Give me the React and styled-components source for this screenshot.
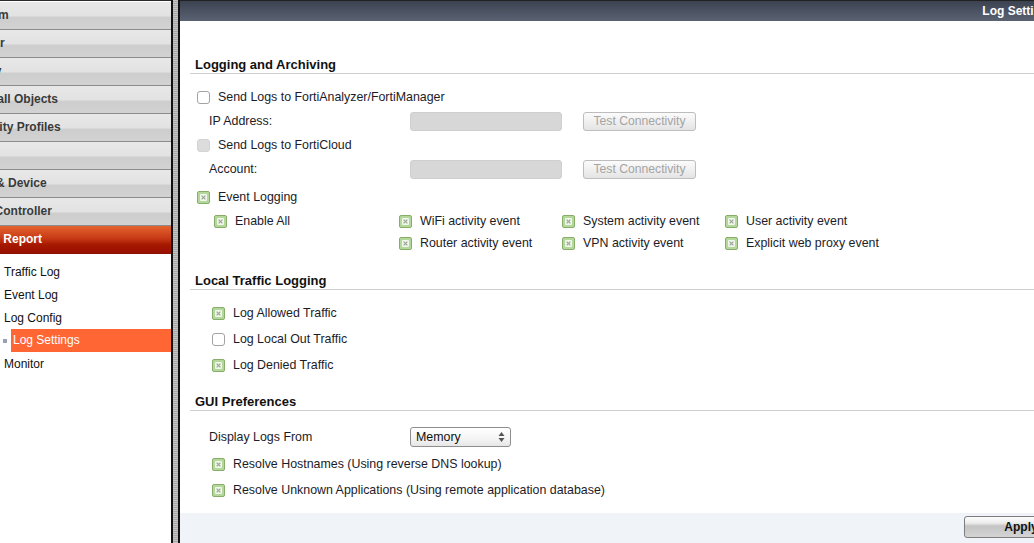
import React from 'react';
import styled, { createGlobalStyle } from 'styled-components';

const GlobalStyle = createGlobalStyle`
    html, body {
        margin: 0;
        padding: 0;
        overflow: hidden;
        background: #fff;
    }
    body {
        font-family: "Liberation Sans", Arial, sans-serif;
        font-size: 12px;
        color: #1c1c28;
    }
`

const Page = styled.div`
    display: flex;
    width: 1090px;
    height: 543px;
`

const Sidebar = styled.div`
    width: 171px;
    flex-shrink: 0;
    overflow: hidden;
    border-top: 1px solid #2a2a2a;
    box-sizing: border-box;
`

const SideInner = styled.div`
    margin-left: -34px;
    padding-top: 1px;
    width: 205px;
`

const MenuItem = styled.div`
    height: 27px;
    line-height: 27px;
    border-bottom: 1px solid ${props => props.$active ? '#8a1200' : '#8c8c8c'};
    font-weight: bold;
    font-size: 12px;
    white-space: nowrap;
    color: ${props => props.$active ? '#fff' : '#3a3a3a'};
    background: ${props => props.$active
        ? 'linear-gradient(to bottom, #e3632f 0%, #c83a16 45%, #a51800 70%, #9a1000 100%)'
        : 'linear-gradient(to bottom, #e8e8e8 0%, #e2e2e2 50%, #cdcdcd 58%, #d3d3d3 100%)'};
`

const SubList = styled.div`
    padding-top: 6px;
`

const SubItem = styled.div`
    display: flex;
    align-items: center;
    height: 23px;
    white-space: nowrap;
    padding-left: ${props => props.$selected ? '37px' : '38px'};
    color: #111;
`

const Bullet = styled.span`
    width: 4px;
    height: 4px;
    background: #9aa0b4;
    margin-right: 4px;
    flex-shrink: 0;
`

const Selected = styled.span`
    flex: 1;
    height: 23px;
    line-height: 23px;
    background: #ff6633;
    color: #fff;
    padding-left: 2px;
`

const Divider = styled.div`
    width: 5px;
    flex-shrink: 0;
    border-left: 2px solid #111;
    border-right: 2px solid #111;
    background: repeating-linear-gradient(to bottom, #c4c4c4 0px, #c4c4c4 1px, #a8a8a8 1px, #a8a8a8 2px);
`

const Main = styled.div`
    flex: 1;
    display: flex;
    flex-direction: column;
    min-width: 0;
`

const Header = styled.div`
    height: 20px;
    line-height: 20px;
    border-top: 1px solid #222;
    background: linear-gradient(to bottom, #3b4351 0%, #4e5665 60%, #5b6372 100%);
    color: #fff;
    font-weight: bold;
    font-size: 12px;
    text-align: right;
    padding-right: 35px;
`

const Content = styled.div`
    flex: 1;
    padding-left: 10px;
    background: #fff;
    font-size: 12.4px;
`

const SectionTitle = styled.div`
    margin-top: ${props => props.$top}px;
    padding-left: 5px;
    height: 16px;
    line-height: 16px;
    font-size: 13px;
    font-weight: bold;
    color: #111;
    border-bottom: 1px solid #cfcfcf;
`

const Rows = styled.div`
    margin-top: ${props => props.$top}px;
`

const Row = styled.div`
    display: flex;
    align-items: center;
    height: ${props => props.$h}px;
    margin-top: ${props => props.$mt || 0}px;
    padding-left: ${props => props.$indent}px;
    gap: 8px;
    white-space: nowrap;
`

const FieldLabel = styled.span`
    width: 193px;
    flex-shrink: 0;
`

const TextBox = styled.div`
    width: 152px;
    height: 19px;
    box-sizing: border-box;
    background: #d7d7d7;
    border: 1px solid #cfcfcf;
    border-radius: 3px;
`

const TestButton = styled.div`
    margin-left: 13px;
    width: 113px;
    height: 19px;
    box-sizing: border-box;
    border: 1px solid #bdbdbd;
    border-radius: 3px;
    background: linear-gradient(to bottom, #fbfbfb 0%, #f0f0f0 50%, #e4e4e4 100%);
    color: #a4a4a4;
    font-size: 12.2px;
    text-align: center;
    line-height: 17px;
`

const EventGrid = styled.div`
    display: grid;
    grid-template-columns: 185px 163px 163px 163px;
    grid-auto-rows: 22px;
    margin-top: 1px;
    margin-left: 24px;
`

const Cell = styled.div`
    display: flex;
    align-items: center;
    gap: 8px;
    white-space: nowrap;
`

const Select = styled.div`
    display: flex;
    align-items: center;
    justify-content: space-between;
    width: 101px;
    height: 20px;
    box-sizing: border-box;
    padding: 0 5px 0 5px;
    border: 1px solid #8e8e8e;
    border-radius: 3px;
    background: linear-gradient(to bottom, #ffffff 0%, #f4f4f4 60%, #e6e6e6 100%);
    color: #111;
`

const Footer = styled.div`
    height: 30px;
    background: #f0f3f8;
    display: flex;
    justify-content: flex-end;
    align-items: flex-start;
    padding-right: 12px;
`

const ApplyButton = styled.div`
    margin-top: 3px;
    width: 114px;
    height: 22px;
    box-sizing: border-box;
    border: 1px solid #7d7d7d;
    border-radius: 3px;
    background: linear-gradient(to bottom, #fdfdfd 0%, #ececec 30%, #c4c4c4 45%, #d4d4d4 100%);
    font-weight: bold;
    color: #111;
    text-align: center;
    line-height: 20px;
`

const Box = styled.span`
    display: inline-flex;
    align-items: center;
    justify-content: center;
    width: 13px;
    height: 13px;
    flex-shrink: 0;
    box-sizing: border-box;
    border-radius: ${props => props.$state === 'on' ? '2px' : '3px'};
    border: 1px solid ${props => props.$state === 'on' ? '#88ad6b' : props.$state === 'off' ? '#a3a3a3' : '#d4d4d4'};
    background: ${props => props.$state === 'on' ? '#b3d89a' : props.$state === 'off' ? '#fff' : '#dcdcdc'};
`

const Check = ({ state }) => (
    <Box $state={state}>
        {state === 'on' &&
            <svg width="7" height="7" viewBox="0 0 7 7">
                <rect width="7" height="7" rx="1" fill="#f2f7ee" />
                <path d="M1.6 1.6l3.8 3.8M5.4 1.6l-3.8 3.8" stroke="#9aa894" strokeWidth="1.3" />
            </svg>}
    </Box>
)

const Arrows = () => (
    <svg width="7" height="12" viewBox="0 0 7 12">
        <path d="M3.5 1L6.5 5H0.5Z" fill="#555" />
        <path d="M3.5 11L6.5 7H0.5Z" fill="#555" />
    </svg>
)

const menu = ['System', 'Router', 'Policy', 'Firewall Objects', 'Security Profiles', 'VPN', 'User & Device', 'WiFi Controller']
const subMenu = ['Traffic Log', 'Event Log', 'Log Config', 'Log Settings', 'Monitor']
const events = [
    'Enable All', 'WiFi activity event', 'System activity event', 'User activity event',
    null, 'Router activity event', 'VPN activity event', 'Explicit web proxy event'
]

class App extends React.Component {
    render() {
        return <>
            <GlobalStyle />
            <Page>
                <Sidebar>
                    <SideInner>
                        {menu.map(m => <MenuItem key={m}>{m}</MenuItem>)}
                        <MenuItem $active>Log &amp; Report</MenuItem>
                        <SubList>
                            {subMenu.map(s => s === 'Log Settings'
                                ? <SubItem key={s} $selected><Bullet /><Selected>{s}</Selected></SubItem>
                                : <SubItem key={s}>{s}</SubItem>)}
                        </SubList>
                    </SideInner>
                </Sidebar>
                <Divider />
                <Main>
                    <Header>Log Settings</Header>
                    <Content>
                        <SectionTitle $top={36}>Logging and Archiving</SectionTitle>
                        <Rows $top={11}>
                            <Row $h={24} $indent={7}><Check state="off" />Send Logs to FortiAnalyzer/FortiManager</Row>
                            <Row $h={24} $indent={19}>
                                <FieldLabel>IP Address:</FieldLabel>
                                <TextBox />
                                <TestButton>Test Connectivity</TestButton>
                            </Row>
                            <Row $h={24} $indent={7}><Check state="disabled" />Send Logs to FortiCloud</Row>
                            <Row $h={24} $indent={19}>
                                <FieldLabel>Account:</FieldLabel>
                                <TextBox />
                                <TestButton>Test Connectivity</TestButton>
                            </Row>
                            <Row $h={24} $mt={4} $indent={7}><Check state="on" />Event Logging</Row>
                            <EventGrid>
                                {events.map((e, i) => e
                                    ? <Cell key={i}><Check state="on" />{e}</Cell>
                                    : <Cell key={i} />)}
                            </EventGrid>
                        </Rows>

                        <SectionTitle $top={19}>Local Traffic Logging</SectionTitle>
                        <Rows $top={10}>
                            <Row $h={26} $indent={22}><Check state="on" />Log Allowed Traffic</Row>
                            <Row $h={26} $indent={22}><Check state="off" />Log Local Out Traffic</Row>
                            <Row $h={26} $indent={22}><Check state="on" />Log Denied Traffic</Row>
                        </Rows>

                        <SectionTitle $top={16}>GUI Preferences</SectionTitle>
                        <Rows $top={11}>
                            <Row $h={29} $indent={19}>
                                <FieldLabel>Display Logs From</FieldLabel>
                                <Select>Memory<Arrows /></Select>
                            </Row>
                            <Row $h={26} $indent={22}><Check state="on" />Resolve Hostnames (Using reverse DNS lookup)</Row>
                            <Row $h={26} $indent={22}><Check state="on" />Resolve Unknown Applications (Using remote application database)</Row>
                        </Rows>
                    </Content>
                    <Footer>
                        <ApplyButton>Apply</ApplyButton>
                    </Footer>
                </Main>
            </Page>
        </>
    }
}

export default App;
